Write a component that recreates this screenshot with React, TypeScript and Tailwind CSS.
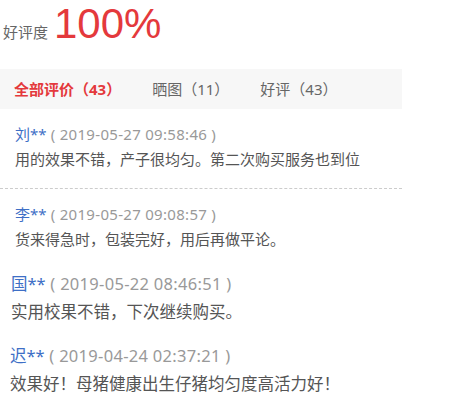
import React from "react";

const comments = [
  { name: "刘**", date: "2019-05-27 09:58:46", text: "用的效果不错，产子很均匀。第二次购买服务也到位" },
  { name: "李**", date: "2019-05-27 09:08:57", text: "货来得急时，包装完好，用后再做平论。" },
  { name: "国**", date: "2019-05-22 08:46:51", text: "实用校果不错，下次继续购买。" },
  { name: "迟**", date: "2019-04-24 02:37:21", text: "效果好！母猪健康出生仔猪均匀度高活力好！" },
];

function Comment({ c }: { c: (typeof comments)[number] }) {
  return (
    <>
      <div className="whitespace-nowrap">
        <span className="text-[#3e6fc6]">{c.name}</span>
        <span className="text-[#999] tracking-[0.3px]"> ( {c.date} )</span>
      </div>
      <div className="text-[#555] whitespace-nowrap">{c.text}</div>
    </>
  );
}

export default function App() {
  return (
    <div className="w-[459px] h-[403px] bg-white overflow-hidden font-['Noto_Sans','Noto_Sans_CJK_SC',sans-serif]">
      <div className="h-[43px] flex items-baseline pl-[3px]">
        <span className="text-[15px] leading-[22px] text-[#666]">好评度</span>
        <span className="ml-[6px] font-['Liberation_Sans',sans-serif] text-[42px] leading-[47px] text-[#e4393c]">100%</span>
      </div>
      <div className="mt-[26px] w-[402px] h-[40px] bg-[#f7f7f7] flex items-center pl-[14px] gap-[31px] text-[15px]">
        <span className="font-bold text-[#e4393c]">全部评价（43）</span>
        <span className="text-[#666]">晒图（11）</span>
        <span className="text-[#666]">好评（43）</span>
      </div>
      <div className="mt-[13px] w-[402px] pl-[15px] pb-[16px] border-b border-dashed border-[#cccccc] text-[15px] leading-[25px]">
        <Comment c={comments[0]} />
      </div>
      <div className="mt-[13px] pl-[15px] text-[15px] leading-[25px]">
        <Comment c={comments[1]} />
      </div>
      <div className="mt-[18px] pl-[11px] text-[16.5px] leading-[28px]">
        <Comment c={comments[2]} />
      </div>
      <div className="mt-[16px] pl-[10px] text-[16.5px] leading-[28px]">
        <Comment c={comments[3]} />
      </div>
    </div>
  );
}
